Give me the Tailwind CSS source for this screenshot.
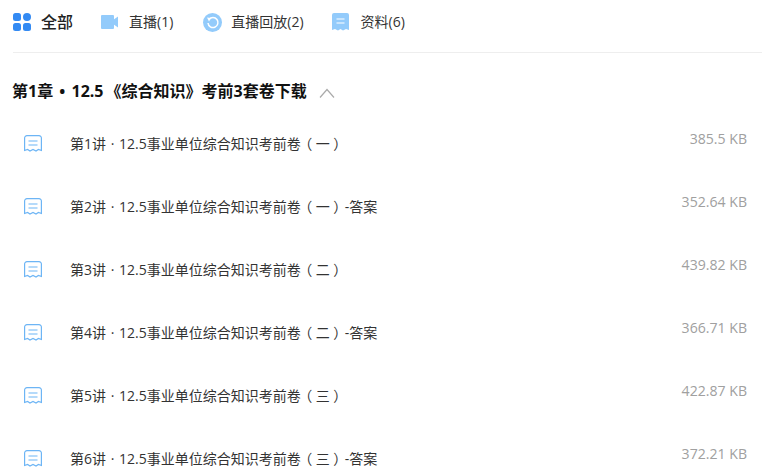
<!DOCTYPE html>
<html lang="zh">
<head>
  <meta charset="UTF-8" />
  <title>资料</title>
  <script src="https://cdn.jsdelivr.net/npm/@tailwindcss/browser@4"></script>
</head>
<body class="h-[472px] w-[762px] overflow-hidden bg-white font-['Open_Sans','Noto_Sans_CJK_SC',sans-serif] text-[#333]">
  <nav class="ml-[13px] flex h-[53px] items-center border-b border-[#eeeeee] pb-[8px] text-sm">
    <div class="flex items-center">
      <svg class="h-[18px] w-[18px]" viewBox="0 0 18 18" fill="#338af3">
        <rect x="0" y="0" width="8" height="8" rx="2.500"/>
        <rect x="10" y="0" width="8" height="8" rx="4"/>
        <rect x="0" y="10" width="8" height="8" rx="2.500"/>
        <rect x="10" y="10" width="8" height="8" rx="2.500"/>
      </svg>
      <span class="ml-[10px] text-base font-medium text-[#222]">全部</span>
    </div>
    <div class="ml-[28px] flex items-center">
      <svg class="h-[14px] w-[17px]" viewBox="0 0 17 14" fill="#93cbfb">
        <rect x="0" y="0" width="13" height="14" rx="1"/>
        <path d="M12 5 17 1.500V12.500L12 9Z"/>
      </svg>
      <span class="ml-[11px]">直播(1)</span>
    </div>
    <div class="ml-[30px] flex items-center">
      <svg class="h-[19px] w-[19px]" viewBox="0 0 19 19">
        <circle cx="9.500" cy="9.500" r="9.500" fill="#93cbfb"/>
        <path d="M6 6.500A5 5 0 1 1 5 10" fill="none" stroke="#fff" stroke-width="1.500"/>
        <path d="M4 4.500 8 5 6 8.500Z" fill="#fff"/>
      </svg>
      <span class="ml-[9px]">直播回放(2)</span>
    </div>
    <div class="ml-[28px] flex items-center">
      <svg class="h-[18px] w-[17px]" viewBox="0 0 17 18">
        <path d="M2 0H15A2 2 0 0 1 17 2V17L14 16 11 17.500 8.500 16 6 17.500 3 16 0 17V2A2 2 0 0 1 2 0Z" fill="#93cbfb"/>
        <path d="M4.500 6H12.500M4.500 10H12.500" stroke="#fff" stroke-width="1.200"/>
      </svg>
      <span class="ml-[12px]">资料(6)</span>
    </div>
  </nav>

  <section class="px-3">
    <h2 class="mt-[26px] flex h-6 items-center text-base font-bold text-[#111] [word-spacing:2px]">
      <span>第1章 • 12.5<span class="ml-[2px]">《</span>综合知识》考前3套卷下载</span>
      <svg class="mt-[3px] ml-3 h-[10px] w-4" viewBox="0 0 16 10" fill="none" stroke="#aaa" stroke-width="1.200"><path d="M1 9.500 8 1.500l7 8"/></svg>
    </h2>

    <ul class="mt-[9px]">
      <li class="flex h-[63px] items-center pr-[3px]">
        <svg class="ml-3 h-[17px] w-[18px] shrink-0" viewBox="0 0 18 17" fill="none" stroke="#6db5f5" stroke-width="1.200"><path d="M3 .6h12a2.400 2.400 0 0 1 2.400 2.400v12.500l-3-1-2.400 1.500-3-1.500-3 1.500-2.400-1.500-3 1V3A2.400 2.400 0 0 1 3 .6ZM4.500 6h9M4.500 10h9"/></svg>
        <span class="ml-[28px] text-sm [word-spacing:1px]">第1讲 · 12.5事业单位综合知识考前卷<span class="px-1 [font-feature-settings:'palt']">（</span>一<span class="px-1 [font-feature-settings:'palt']">）</span></span>
        <span class="-mt-[10px] ml-auto text-[14.100px] text-[#a0a0a0]">385.5 KB</span>
      </li>
      <li class="flex h-[63px] items-center pr-[3px]">
        <svg class="ml-3 h-[17px] w-[18px] shrink-0" viewBox="0 0 18 17" fill="none" stroke="#6db5f5" stroke-width="1.200"><path d="M3 .6h12a2.400 2.400 0 0 1 2.400 2.400v12.500l-3-1-2.400 1.500-3-1.500-3 1.500-2.400-1.500-3 1V3A2.400 2.400 0 0 1 3 .6ZM4.500 6h9M4.500 10h9"/></svg>
        <span class="ml-[28px] text-sm [word-spacing:1px]">第2讲 · 12.5事业单位综合知识考前卷<span class="px-1 [font-feature-settings:'palt']">（</span>一<span class="px-1 [font-feature-settings:'palt']">）</span>-答案</span>
        <span class="-mt-[10px] ml-auto text-[14.100px] text-[#a0a0a0]">352.64 KB</span>
      </li>
      <li class="flex h-[63px] items-center pr-[3px]">
        <svg class="ml-3 h-[17px] w-[18px] shrink-0" viewBox="0 0 18 17" fill="none" stroke="#6db5f5" stroke-width="1.200"><path d="M3 .6h12a2.400 2.400 0 0 1 2.400 2.400v12.500l-3-1-2.400 1.500-3-1.500-3 1.500-2.400-1.500-3 1V3A2.400 2.400 0 0 1 3 .6ZM4.500 6h9M4.500 10h9"/></svg>
        <span class="ml-[28px] text-sm [word-spacing:1px]">第3讲 · 12.5事业单位综合知识考前卷<span class="px-1 [font-feature-settings:'palt']">（</span>二<span class="px-1 [font-feature-settings:'palt']">）</span></span>
        <span class="-mt-[10px] ml-auto text-[14.100px] text-[#a0a0a0]">439.82 KB</span>
      </li>
      <li class="flex h-[63px] items-center pr-[3px]">
        <svg class="ml-3 h-[17px] w-[18px] shrink-0" viewBox="0 0 18 17" fill="none" stroke="#6db5f5" stroke-width="1.200"><path d="M3 .6h12a2.400 2.400 0 0 1 2.400 2.400v12.500l-3-1-2.400 1.500-3-1.500-3 1.500-2.400-1.500-3 1V3A2.400 2.400 0 0 1 3 .6ZM4.500 6h9M4.500 10h9"/></svg>
        <span class="ml-[28px] text-sm [word-spacing:1px]">第4讲 · 12.5事业单位综合知识考前卷<span class="px-1 [font-feature-settings:'palt']">（</span>二<span class="px-1 [font-feature-settings:'palt']">）</span>-答案</span>
        <span class="-mt-[10px] ml-auto text-[14.100px] text-[#a0a0a0]">366.71 KB</span>
      </li>
      <li class="flex h-[63px] items-center pr-[3px]">
        <svg class="ml-3 h-[17px] w-[18px] shrink-0" viewBox="0 0 18 17" fill="none" stroke="#6db5f5" stroke-width="1.200"><path d="M3 .6h12a2.400 2.400 0 0 1 2.400 2.400v12.500l-3-1-2.400 1.500-3-1.500-3 1.500-2.400-1.500-3 1V3A2.400 2.400 0 0 1 3 .6ZM4.500 6h9M4.500 10h9"/></svg>
        <span class="ml-[28px] text-sm [word-spacing:1px]">第5讲 · 12.5事业单位综合知识考前卷<span class="px-1 [font-feature-settings:'palt']">（</span>三<span class="px-1 [font-feature-settings:'palt']">）</span></span>
        <span class="-mt-[10px] ml-auto text-[14.100px] text-[#a0a0a0]">422.87 KB</span>
      </li>
      <li class="flex h-[63px] items-center pr-[3px]">
        <svg class="ml-3 h-[17px] w-[18px] shrink-0" viewBox="0 0 18 17" fill="none" stroke="#6db5f5" stroke-width="1.200"><path d="M3 .6h12a2.400 2.400 0 0 1 2.400 2.400v12.500l-3-1-2.400 1.500-3-1.500-3 1.500-2.400-1.500-3 1V3A2.400 2.400 0 0 1 3 .6ZM4.500 6h9M4.500 10h9"/></svg>
        <span class="ml-[28px] text-sm [word-spacing:1px]">第6讲 · 12.5事业单位综合知识考前卷<span class="px-1 [font-feature-settings:'palt']">（</span>三<span class="px-1 [font-feature-settings:'palt']">）</span>-答案</span>
        <span class="-mt-[10px] ml-auto text-[14.100px] text-[#a0a0a0]">372.21 KB</span>
      </li>
    </ul>
  </section>
</body>
</html>
